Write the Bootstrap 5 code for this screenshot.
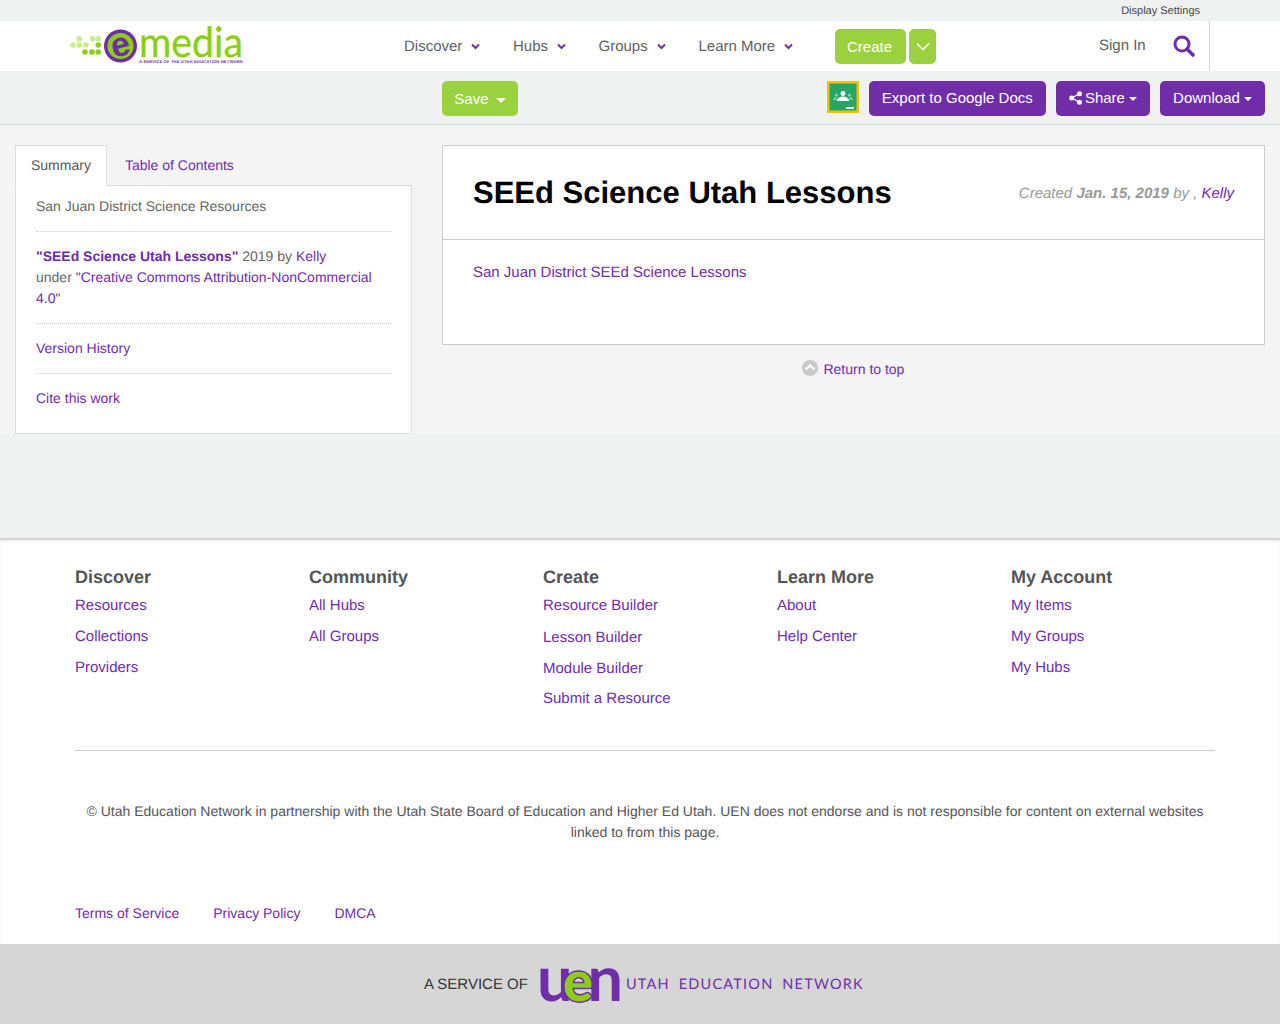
<!DOCTYPE html>
<html lang="en">
<head>
    <meta charset="UTF-8">
    <meta name="viewport" content="width=device-width, initial-scale=1.0">
    <title>SEEd Science Utah Lessons</title>

    <link href="https://cdn.jsdelivr.net/npm/bootstrap@5.3.0/dist/css/bootstrap.min.css" rel="stylesheet">
    <style>
        body {
            font-family: "Liberation Sans", Arial, sans-serif;
            font-size: 14px;
            line-height: 21px;
            color: #555;
            background: #fff;
            text-rendering: geometricPrecision;
        }
        a { color: #6f2da8; text-decoration: none; }

        .top-strip { height: 21px; background: #f0f2f2; font-size: 11px; line-height: 23px; padding-right: 80px; color: #444; }

        .main-bar { height: 50px; background: #fff; }
        .logo-box { width: 404px; padding-left: 70px; padding-top: 4px; height: 50px; }
        .logo-box svg { overflow: visible; }
        .menu-links { width: 431px; }
        .menu-links a { color: #5f5f5f; font-size: 15px; display: flex; align-items: center; }
        .menu-links a svg { margin-left: 9px; margin-top: 1px; }
        .menu-item-1 { width: 109px; }
        .menu-item-2 { width: 85.5px; }
        .menu-item-3 { width: 100px; }
        .btn-lime { background: #9bd13f; color: #fff; border: 0; border-radius: 5px; font-size: 15px; height: 35px; line-height: 35px; padding: 0; }
        .btn-lime:hover { background: #9bd13f; color: #fff; }
        .btn-create { width: 71px; padding-right: 2px; }
        .btn-create-arrow { width: 27px; margin-left: 3px; }
        .sign-in { color: #5f5f5f; font-size: 15px; margin-left: 163px; margin-top: -1px; }
        .search-link { margin-left: 27px; height: 50px; width: 37px; border-right: 1px solid #d5d5d5; }

        .tool-bar { height: 54px; background: #f0f2f2; border-bottom: 1px solid #d5d5d5; padding: 10px 15px 0 442px; }
        .btn-save { width: 76px; }
        .btn-violet { background: #6f2da8; color: #fff; border: 0; border-radius: 5px; font-size: 15px; height: 35px; padding: 0 13px; }
        .btn-violet:hover { background: #6f2da8; color: #fff; }
        .tool-gap { margin-left: 10px; }
        .caret-down { display: inline-block; border-top: 4px solid #fff; border-left: 4px solid transparent; border-right: 4px solid transparent; vertical-align: middle; }
        .caret-big { border-top-width: 5px; border-left-width: 5px; border-right-width: 5px; margin-left: 3px; }
        .classroom-icon { width: 32px; height: 32px; margin-right: 10px; }
        .share-icon { margin-top: -3px; margin-right: -1px; }

        .main-area { height: 413px; background: #f0f2f2; }
        .main-inner { height: 309px; background: #f4f4f4; padding: 20px 15px 0; }
        .side-col { width: 397px; margin-right: 30px; }
        .side-tabs { margin-bottom: 0; border-bottom: 1px solid #ddd; }
        .side-tabs .nav-link { color: #6f2da8; padding: 9px 17px 10px; height: 41px; border-radius: 0; margin-bottom: -1px; border: 1px solid transparent; }
        .side-tabs .nav-link.active { color: #555; background: #fff; border-color: #ddd #ddd #fff; padding: 9px 15px 10px; }
        .side-panel { background: #fff; border: 1px solid #ddd; border-top: 0; padding: 10px 20px 0; height: 248px; color: #666; }
        .side-block { border-bottom: 1px dotted #ccc; padding-bottom: 14px; margin-bottom: 14px; width: 355px; }
        .side-block.last-one { border: 0; }
        .side-panel b { font-weight: 700; }

        .doc-card { flex: 1; background: #fff; border: 1px solid #ccc; height: 200px; }
        .doc-head { height: 94px; padding: 0 30px; border-bottom: 1px solid #ccc; }
        .doc-head h1 { font-size: 31px; line-height: 34px; font-weight: 700; color: #000; margin: 0; }
        .doc-meta { font-size: 15px; font-style: italic; color: #999; margin-top: 1px; }
        .doc-meta b { color: #999; }
        .doc-body { padding: 22px 30px; font-size: 15px; }
        .back-top { margin-top: 14px; padding-right: 1px; }
        .back-top svg { margin-right: 2px; margin-top: -5px; }

        .site-foot { height: 406px; background: #fff; box-shadow: inset 0 3px 3px -1px rgba(0, 0, 0, .22); padding: 0 65px 0 75px; }
        .foot-cols { display: grid; grid-template-columns: repeat(5, 234px); padding-top: 27px; height: 213px; border-bottom: 1px solid #ccc; }
        .foot-cols h5 { font-size: 18px; line-height: 24px; font-weight: 700; color: #555; margin: 0 0 6px; }
        .foot-cols a { display: block; font-size: 15px; line-height: 21px; margin-bottom: 10px; }
        .foot-create a:nth-of-type(1) { margin-bottom: 11px; }
        .foot-create a:nth-of-type(3) { margin-bottom: 9px; }
        .foot-note { padding-top: 50px; text-align: center; height: 152px; }
        .foot-legal { gap: 34px; }

        .service-bar { height: 80px; background: #d6d6d6; color: #333; font-size: 15px; padding: 1px 0 0 424px; }
        .uen-mark { margin-left: 12px; overflow: visible; }
        .uen-name { color: #6f2da8; font-family: "Lato", "Liberation Sans", sans-serif; font-size: 14.5px; letter-spacing: 1.2px; word-spacing: 4px; margin-left: 6px; }
    </style>
</head>
<body>
    <!-- top strip -->
    <div class="top-strip text-end">Display Settings</div>

    <!-- main nav -->
    <div class="main-bar d-flex align-items-center">
        <div class="logo-box">
            <svg width="174" height="42" viewBox="0 0 174 42" class="d-block">
                <g fill="#c5f08a">
                    <circle cx="3" cy="20" r="2.8"/><circle cx="9.300" cy="13.700" r="2.800"/><circle cx="9.300" cy="20" r="2.800"/>
                    <circle cx="16" cy="20" r="2.800"/><circle cx="22.700" cy="13.700" r="2.800"/><circle cx="28.300" cy="13.700" r="2.800"/>
                </g>
                <g fill="#8ccf10">
                    <circle cx="28.300" cy="20" r="2.800"/><circle cx="15" cy="27" r="2.800"/><circle cx="22" cy="27" r="2.800"/><circle cx="28.300" cy="27" r="2.800"/>
                </g>
                <circle cx="50.500" cy="21" r="16.500" fill="#6f2da8"/>
                <ellipse cx="50.500" cy="21" rx="13" ry="13" fill="#8ccf10"/>
                <text x="50.500" y="31" text-anchor="middle" font-family="Liberation Sans, sans-serif" font-weight="700" font-size="34" fill="#6f2da8" transform="rotate(-14 50.500 21)">e</text>
                <text x="69" y="32" font-family="Lato, sans-serif" font-size="42" fill="#8ccf10" stroke="#8ccf10" stroke-width=".3" textLength="104" lengthAdjust="spacingAndGlyphs">media</text>
                <text x="69" y="38" font-family="Liberation Sans, sans-serif" font-weight="700" font-size="4.200" fill="#6f2da8" textLength="104">A SERVICE OF THE UTAH EDUCATION NETWORK</text>
            </svg>
        </div>
        <nav class="menu-links d-flex">
            <a href="#" class="menu-item-1">Discover
                <svg width="9" height="7" viewBox="0 0 9 7"><path d="M1 1.500l3.500 3.500L8 1.500" fill="none" stroke="#6f2da8" stroke-width="2"/></svg></a>
            <a href="#" class="menu-item-2">Hubs
                <svg width="9" height="7" viewBox="0 0 9 7"><path d="M1 1.500l3.500 3.500L8 1.500" fill="none" stroke="#6f2da8" stroke-width="2"/></svg></a>
            <a href="#" class="menu-item-3">Groups
                <svg width="9" height="7" viewBox="0 0 9 7"><path d="M1 1.500l3.500 3.500L8 1.500" fill="none" stroke="#6f2da8" stroke-width="2"/></svg></a>
            <a href="#">Learn More
                <svg width="9" height="7" viewBox="0 0 9 7"><path d="M1 1.500l3.500 3.500L8 1.500" fill="none" stroke="#6f2da8" stroke-width="2"/></svg></a>
        </nav>
        <button type="button" class="btn btn-lime btn-create">Create</button>
        <button type="button" class="btn btn-lime btn-create-arrow d-flex align-items-center justify-content-center">
            <svg width="14" height="9" viewBox="0 0 14 9"><path d="M1 1.500l6 6 6-6" fill="none" stroke="#fff" stroke-width="1.600"/></svg>
        </button>
        <a href="#" class="sign-in">Sign In</a>
        <a href="#" class="search-link d-flex align-items-center">
            <svg width="22" height="22" viewBox="0 0 22 22"><circle cx="9" cy="9" r="7" fill="none" stroke="#6f2da8" stroke-width="3"/><path d="M14 14l6 6" stroke="#6f2da8" stroke-width="3.600" stroke-linecap="round"/></svg>
        </a>
    </div>

    <!-- document toolbar -->
    <div class="tool-bar d-flex align-items-start">
        <button type="button" class="btn btn-lime btn-save">Save <span class="caret-down caret-big"></span></button>
        <div class="ms-auto d-flex">
            <svg class="classroom-icon" viewBox="0 0 32 32">
                <rect width="32" height="32" fill="#fbbc05"/>
                <rect x="2.500" y="2.500" width="27" height="27" fill="#25a667"/>
                <circle cx="16" cy="12.500" r="2.400" fill="#fff"/>
                <path d="M10 20c0-3 3-4.500 6-4.500s6 1.500 6 4.500z" fill="#fff"/>
                <circle cx="9.500" cy="14" r="1.600" fill="#7fd0a5"/><circle cx="22.500" cy="14" r="1.600" fill="#7fd0a5"/>
                <path d="M6 19c0-2 2-3 3.500-3v3zM26 19c0-2-2-3-3.500-3v3z" fill="#7fd0a5"/>
                <rect x="19" y="26" width="8" height="1.800" fill="#fff"/>
            </svg>
            <button type="button" class="btn btn-violet">Export to Google Docs</button>
            <button type="button" class="btn btn-violet tool-gap">
                <svg class="share-icon" width="13" height="14" viewBox="0 0 13 14"><circle cx="10.500" cy="2.800" r="2.500" fill="#fff"/><circle cx="2.700" cy="7" r="2.500" fill="#fff"/><circle cx="10.500" cy="11.200" r="2.500" fill="#fff"/><path d="M10.500 2.800L2.700 7l7.800 4.200" fill="none" stroke="#fff" stroke-width="1.300"/></svg>
                Share <span class="caret-down"></span></button>
            <button type="button" class="btn btn-violet tool-gap">Download <span class="caret-down"></span></button>
        </div>
    </div>

    <!-- content -->
    <div class="main-area">
        <div class="main-inner d-flex align-items-start">
            <div class="side-col">
                <ul class="nav nav-tabs side-tabs">
                    <li class="nav-item"><a class="nav-link active" href="#">Summary</a></li>
                    <li class="nav-item"><a class="nav-link" href="#">Table of Contents</a></li>
                </ul>
                <div class="side-panel">
                    <div class="side-block">San Juan District Science Resources</div>
                    <div class="side-block"><a href="#"><b>"SEEd Science Utah Lessons"</b></a> 2019 by <a href="#">Kelly</a><br>under <a href="#">"Creative Commons Attribution-NonCommercial 4.0"</a></div>
                    <div class="side-block"><a href="#">Version History</a></div>
                    <div class="side-block last-one"><a href="#">Cite this work</a></div>
                </div>
            </div>
            <div class="flex-grow-1">
                <div class="doc-card">
                    <div class="doc-head d-flex align-items-center justify-content-between">
                        <h1>SEEd Science Utah Lessons</h1>
                        <div class="doc-meta">Created <b>Jan. 15, 2019</b> by , <a href="#">Kelly</a></div>
                    </div>
                    <div class="doc-body"><a href="#">San Juan District SEEd Science Lessons</a></div>
                </div>
                <div class="back-top text-center">
                    <svg width="16" height="16" viewBox="0 0 16 16"><circle cx="8" cy="8" r="8" fill="#c9c9c9"/><path d="M3.500 9.500L8 5.500l4.500 4" fill="none" stroke="#fff" stroke-width="2.200"/></svg>
                    <a href="#">Return to top</a>
                </div>
            </div>
        </div>
    </div>

    <!-- footer -->
    <footer class="site-foot">
        <div class="foot-cols">
            <div>
                <h5>Discover</h5>
                <a href="#">Resources</a><a href="#">Collections</a><a href="#">Providers</a>
            </div>
            <div>
                <h5>Community</h5>
                <a href="#">All Hubs</a><a href="#">All Groups</a>
            </div>
            <div class="foot-create">
                <h5>Create</h5>
                <a href="#">Resource Builder</a><a href="#">Lesson Builder</a><a href="#">Module Builder</a><a href="#">Submit a Resource</a>
            </div>
            <div>
                <h5>Learn More</h5>
                <a href="#">About</a><a href="#">Help Center</a>
            </div>
            <div>
                <h5>My Account</h5>
                <a href="#">My Items</a><a href="#">My Groups</a><a href="#">My Hubs</a>
            </div>
        </div>
        <div class="foot-note">© Utah Education Network in partnership with the Utah State Board of Education and Higher Ed Utah. UEN does not endorse and is not responsible for content on external websites<br>linked to from this page.</div>
        <div class="foot-legal d-flex">
            <a href="#">Terms of Service</a><a href="#">Privacy Policy</a><a href="#">DMCA</a>
        </div>
    </footer>

    <div class="service-bar d-flex align-items-center">
        A SERVICE OF
        <svg class="uen-mark" width="80" height="40" viewBox="0 0 80 40">
            <text x="-3" y="36" font-family="Lato, sans-serif" font-weight="700" font-size="63" fill="#6f2da8">u</text>
            <text x="83" y="36" text-anchor="end" font-family="Lato, sans-serif" font-weight="700" font-size="63" fill="#6f2da8">n</text>
            <text x="38" y="36" text-anchor="middle" font-family="Lato, sans-serif" font-weight="900" font-size="56" fill="#8ccf10" stroke="#6f2da8" stroke-width="3" paint-order="stroke">e</text>
        </svg>
        <div class="uen-name">UTAH EDUCATION NETWORK</div>
    </div>

    <script src="https://cdn.jsdelivr.net/npm/bootstrap@5.3.0/dist/js/bootstrap.bundle.min.js"></script>
</body>
</html>
